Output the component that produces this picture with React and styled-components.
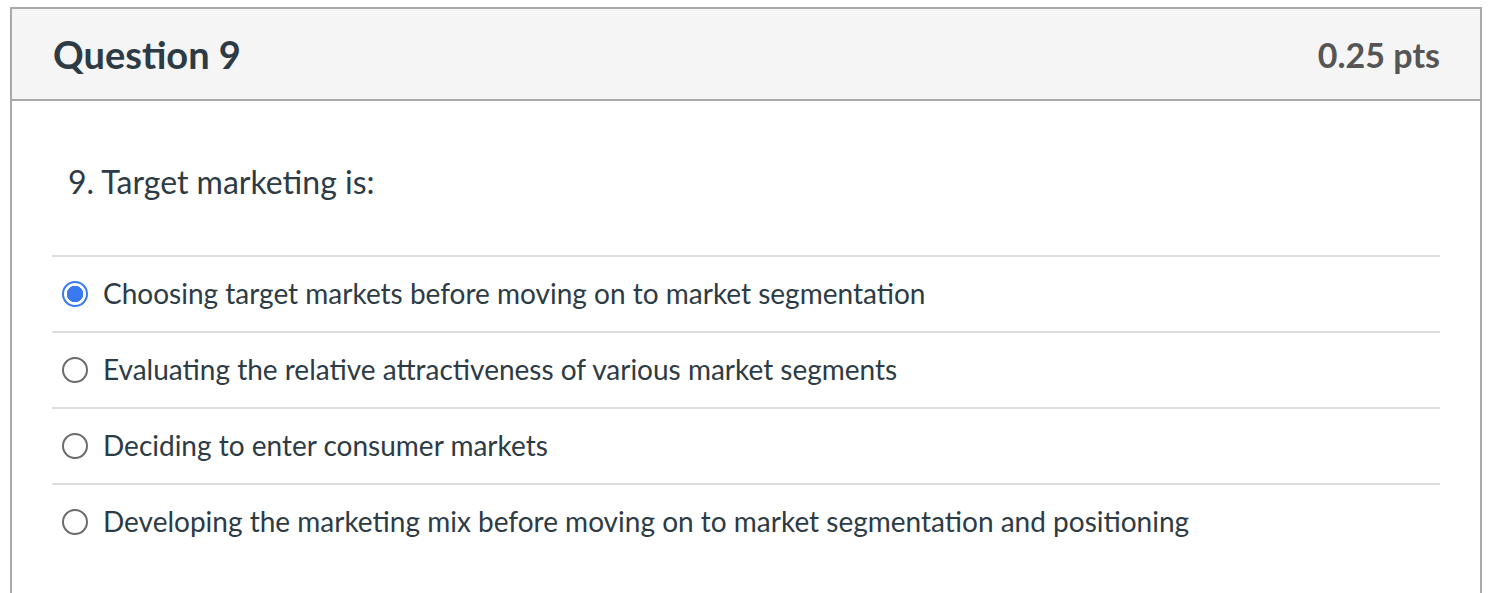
import React from 'react'
import styled, { createGlobalStyle } from 'styled-components'

const Global = createGlobalStyle`
  body {
    margin: 0;
    background: #fff;
    font-family: Lato, "Open Sans", sans-serif;
  }
`

const Card = styled.div`
  margin: 7px 17px 0 10px;
  border: 2px solid #a9a9a9;
  border-bottom: none;
  height: 600px;
`

const Header = styled.div`
  display: flex;
  justify-content: space-between;
  align-items: center;
  height: 90px;
  padding: 0 40px 0 41px;
  background: #f5f5f5;
  border-bottom: 2px solid #a9a9a9;
`

const Title = styled.h2`
  margin: 0;
  font-size: 38px;
  font-weight: 700;
  color: #2d3b45;
`

const Points = styled.div`
  font-size: 34px;
  font-weight: 700;
  color: #555;
`

const Body = styled.div`
  padding: 60px 40px 0 40px;
`

const Prompt = styled.p`
  margin: 0 0 52px 16px;
  font-size: 32px;
  line-height: 42px;
  color: #2d3b45;
`

const Answers = styled.div`
  display: flex;
  flex-direction: column;
`

const Answer = styled.label`
  display: flex;
  align-items: center;
  gap: 15px;
  height: 71px;
  padding: 0 0 3px 10px;
  border-top: 2px solid #dddddd;
  font-size: 28px;
  color: #2d3b45;
`

const Radio = styled.span`
  box-sizing: border-box;
  width: 26px;
  height: 26px;
  border-radius: 50%;
  flex-shrink: 0;
  margin-top: 2px;
  border: ${p => (p.$checked ? '2.5px solid #3a7af0' : '2px solid #6b6b6b')};
  background: ${p => (p.$checked ? 'radial-gradient(circle, #3a7af0 0 8px, #fff 8.5px)' : '#fff')};
`

const options = [
  'Choosing target markets before moving on to market segmentation',
  'Evaluating the relative attractiveness of various market segments',
  'Deciding to enter consumer markets',
  'Developing the marketing mix before moving on to market segmentation and positioning',
]

export default function App() {
  return (
    <>
      <Global />
      <Card>
        <Header>
          <Title>Question 9</Title>
          <Points>0.25 pts</Points>
        </Header>
        <Body>
          <Prompt>9. Target marketing is:</Prompt>
          <Answers>
            {options.map((o, i) => (
              <Answer key={i}>
                <Radio $checked={i === 0} />
                {o}
              </Answer>
            ))}
          </Answers>
        </Body>
      </Card>
    </>
  )
}
